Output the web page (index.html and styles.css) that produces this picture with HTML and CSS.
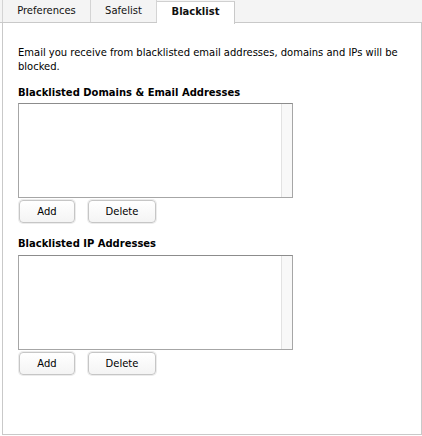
FILE: index.html
```html
<!DOCTYPE html>
<html>
<head>
<meta charset="utf-8">
<link rel="stylesheet" href="styles.css">
</head>
<body>
<div class="window">
  <div class="tabs">
    <div class="tab tab-pref">Preferences</div>
    <div class="tab tab-safe">Safelist</div>
    <div class="tab tab-black active">Blacklist</div>
  </div>
  <div class="panel">
    <p class="intro">Email you receive from blacklisted email addresses, domains and IPs will be blocked.</p>
    <div class="section">
      <div class="label">Blacklisted Domains &amp; Email Addresses</div>
      <div class="listbox"><div class="scroll"></div></div>
      <div class="buttons">
        <button class="btn btn-add">Add</button>
        <button class="btn btn-del">Delete</button>
      </div>
    </div>
    <div class="section second">
      <div class="label">Blacklisted IP Addresses</div>
      <div class="listbox"><div class="scroll"></div></div>
      <div class="buttons">
        <button class="btn btn-add">Add</button>
        <button class="btn btn-del">Delete</button>
      </div>
    </div>
  </div>
</div>
</body>
</html>
```

FILE: styles.css
```css
* { box-sizing: border-box; }
html, body {
  margin: 0;
  padding: 0;
  background: #ffffff;
}
body {
  font-family: "DejaVu Sans Condensed", "DejaVu Sans", Verdana, sans-serif;
  font-size: 11.1px;
  color: #000;
  width: 422px;
  height: 436px;
}
.window {
  display: flex;
  flex-direction: column;
  height: 435px;
}
.tabs {
  display: flex;
  height: 23px;
  background: #f4f4f4;
  border-bottom: 1px solid #c9c9c9;
  padding-left: 2px;
}
.tab {
  height: 22px;
  line-height: 22px;
  text-align: center;
  color: #111;
  border-right: 1px solid #d4d4d4;
}
.tab-pref {
  width: 89px;
  border-left: 1px solid #d4d4d4;
}
.tab-safe { width: 66px; }
.tab-black { width: 78px; }
.tab.active {
  background: #ffffff;
  font-weight: bold;
  height: 23px;
  margin-top: 1px;
  border-top: 1px solid #d0d0d0;
  border-right: 1px solid #c9c9c9;
  line-height: 20px;
}
.panel {
  flex: 1;
  margin-left: 2px;
  width: 420px;
  border: 1px solid #c9c9c9;
  border-top: none;
  padding: 23px 15px 0 15px;
}
.intro {
  margin: 0;
  line-height: 14px;
}
.label {
  font-weight: bold;
  line-height: 14px;
  margin-top: 12px;
  margin-bottom: 3px;
}
.second .label {
  margin-top: 14px;
  margin-bottom: 4px;
}
.listbox {
  width: 275px;
  height: 95px;
  border: 1px solid #a6a6a6;
  border-top-color: #8c8c8c;
  display: flex;
  justify-content: flex-end;
  background: #fff;
}
.scroll {
  width: 11px;
  background: #f8f8f8;
  border-left: 1px solid #e2e2e2;
}
.buttons {
  display: flex;
  gap: 13px;
  margin-top: 2px;
  padding-left: 1px;
}
.btn {
  font-family: inherit;
  font-size: 11.1px;
  height: 23px;
  padding: 0;
  border: 1px solid #c6c6c6;
  border-radius: 4px;
  background: linear-gradient(#ffffff, #f4f4f4);
  color: #000;
  box-shadow: 0 0 0 1px #ececec;
}
.btn-add { width: 56px; }
.btn-del { width: 68px; }
```
